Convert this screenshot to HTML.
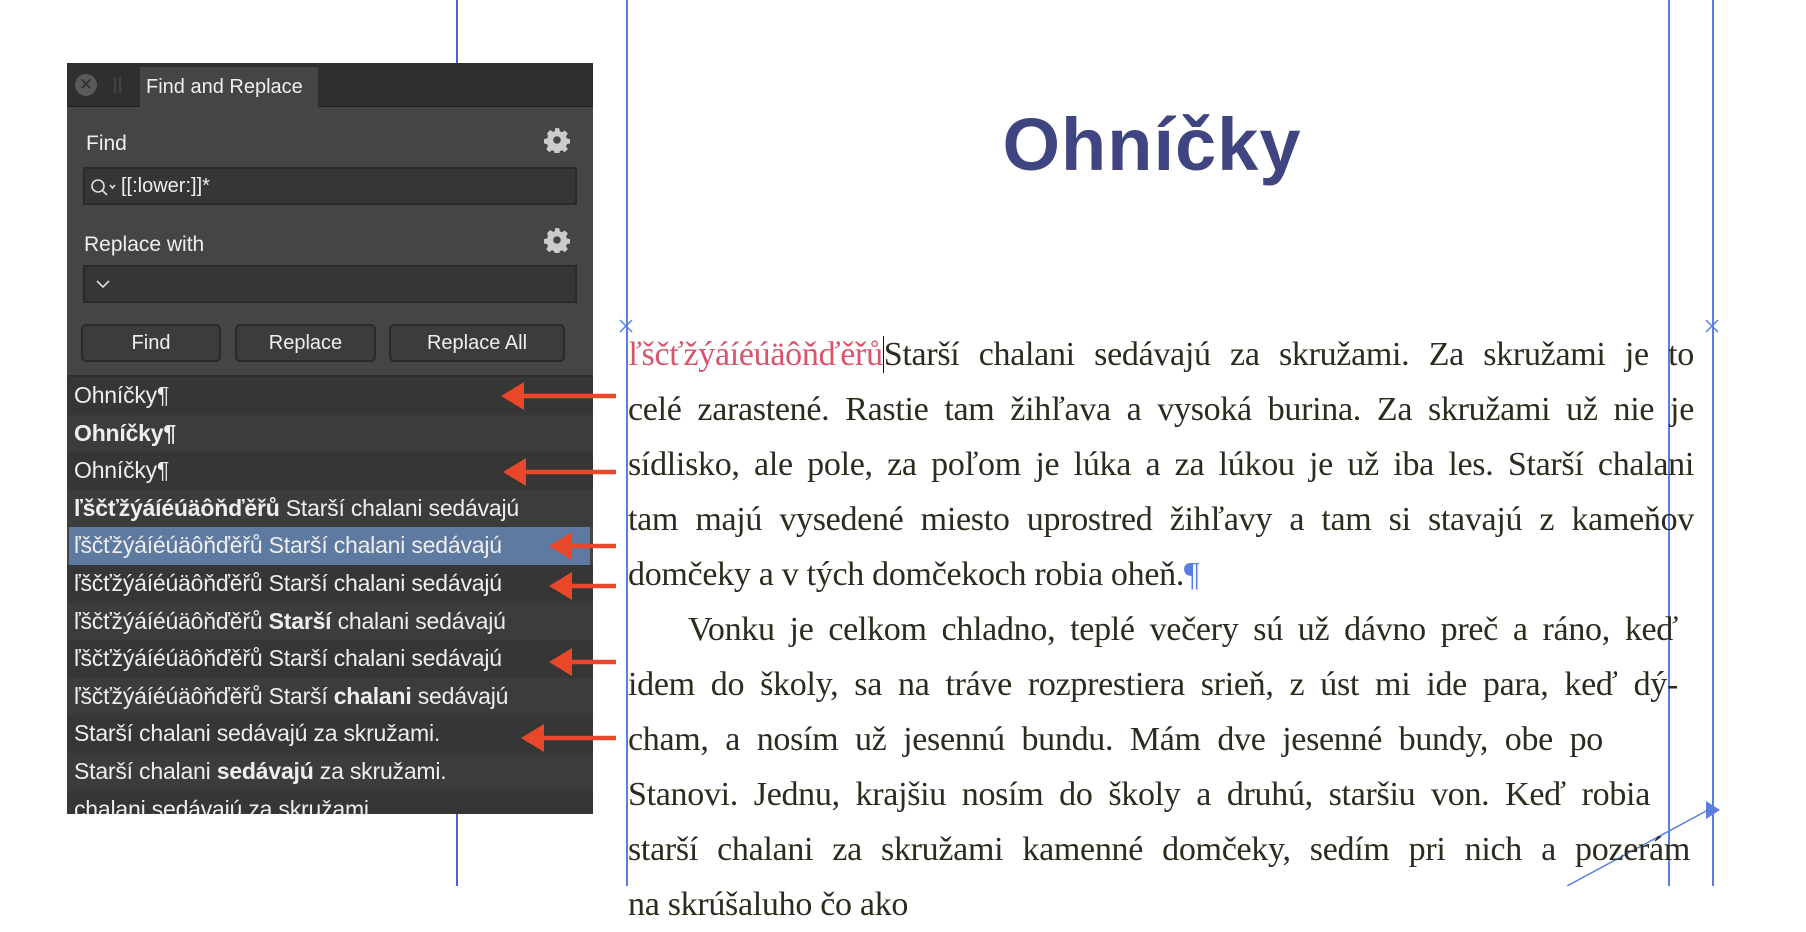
<!DOCTYPE html>
<html><head><meta charset="utf-8"><style>
*{margin:0;padding:0;box-sizing:border-box}
body{width:1806px;height:886px;background:#fff;position:relative;overflow:hidden;font-family:"Liberation Sans",sans-serif}
.abs{position:absolute}
.vl{position:absolute;width:1.5px;background:#4a62d8}
#panel{left:67px;top:63px;width:526px;height:751px;background:#454545;overflow:hidden}
#tabbar{left:0;top:0;width:526px;height:44px;background:#2f2f2f;border-bottom:1px solid #222}
#tab{left:73px;top:4px;width:178px;height:40px;background:#454545;color:#eee;font-size:20px;line-height:40px;padding-left:6px}
.lbl{color:#eee;font-size:21px}
.inp{position:absolute;left:16px;width:494px;height:38px;background:#363636;border:2px solid #2a2a2a;color:#eee;font-size:20px;line-height:34px}
.btn{position:absolute;top:261px;height:38px;background:#3c3c3c;border:2px solid #2a2a2a;border-radius:5px;color:#eee;font-size:20px;text-align:center;line-height:34px}
.row{position:absolute;left:0;width:526px;height:37.6px;color:#eee;font-size:23px;line-height:37px;padding-left:7px;white-space:nowrap;letter-spacing:-0.2px}
.a{background:#363636}.b{background:#3c3c3c}
.txt{position:absolute;left:628px;width:1066px;font-family:"Liberation Serif",serif;font-size:34px;color:#2b2b1e;line-height:55px;text-align:justify;text-align-last:justify;white-space:normal;height:55px;overflow:visible;letter-spacing:-0.3px}
.nj{text-align-last:left;text-align:left}
</style></head><body>
<div class="vl" style="left:456px;top:0;height:63px"></div>
<div class="vl" style="left:456px;top:814px;height:72px"></div>
<div class="vl" style="left:626px;top:0;height:886px;background:#5a7de0"></div>
<div class="vl" style="left:1668px;top:0;height:886px;background:#5a7de0"></div>
<div class="vl" style="left:1712px;top:0;height:886px;background:#5a7de0"></div>

<div id="panel" class="abs">
 <div id="tabbar" class="abs">
  <div class="abs" style="left:8px;top:11px;width:22px;height:22px;border-radius:50%;background:#5a5a5a;color:#2f2f2f;font-size:17px;line-height:22px;text-align:center">✕</div>
  <div class="abs" style="left:47px;top:14px;width:2px;height:16px;background:#444"></div>
  <div class="abs" style="left:52px;top:14px;width:2px;height:16px;background:#444"></div>
  <div id="tab" class="abs">Find and Replace</div>
 </div>
 <div class="abs lbl" style="left:19px;top:69px">Find</div>
 <svg class="abs" style="left:477px;top:64px" width="26" height="26" viewBox="0 0 24 24"><path fill="#ccc" d="M10 1h4l.6 3 2 .9 2.6-1.7 2.8 2.8-1.7 2.6.9 2 3 .6v4l-3 .6-.9 2 1.7 2.6-2.8 2.8-2.6-1.7-2 .9-.6 3h-4l-.6-3-2-.9-2.6 1.7-2.8-2.8 1.7-2.6-.9-2-3-.6v-4l3-.6.9-2L2.9 5.6 5.7 2.8l2.6 1.7 2-.9z"/><circle cx="12" cy="12" r="3.5" fill="#454545"/></svg>
 <div class="inp" style="top:104px;padding-left:4px">
  <svg style="vertical-align:middle" width="32" height="22" viewBox="0 0 32 22"><circle cx="9" cy="10" r="6" stroke="#ddd" stroke-width="1.6" fill="none"/><path d="M13 14l5 5M21 9l2.5 3 2.5-3" stroke="#ddd" stroke-width="1.6" fill="none"/></svg>[[:lower:]]*
 </div>
 <div class="abs lbl" style="left:17px;top:170px">Replace with</div>
 <svg class="abs" style="left:477px;top:164px" width="26" height="26" viewBox="0 0 24 24"><path fill="#ccc" d="M10 1h4l.6 3 2 .9 2.6-1.7 2.8 2.8-1.7 2.6.9 2 3 .6v4l-3 .6-.9 2 1.7 2.6-2.8 2.8-2.6-1.7-2 .9-.6 3h-4l-.6-3-2-.9-2.6 1.7-2.8-2.8 1.7-2.6-.9-2-3-.6v-4l3-.6.9-2L2.9 5.6 5.7 2.8l2.6 1.7 2-.9z"/><circle cx="12" cy="12" r="3.5" fill="#454545"/></svg>
 <div class="inp" style="top:202px"><svg class="abs" style="left:10px;top:10px" width="16" height="14"><path d="M2 4l6 6 6-6" stroke="#ddd" stroke-width="1.6" fill="none"/></svg></div>
 <div class="btn" style="left:14px;width:140px">Find</div>
 <div class="btn" style="left:168px;width:141px">Replace</div>
 <div class="btn" style="left:322px;width:176px">Replace All</div>
 <div class="abs" style="left:0;top:312px;width:526px;height:2px;background:#2e2e2e"></div>
 <div class="row a" style="top:314px">Ohníčky¶</div>
 <div class="row b" style="top:351.6px"><b>Ohníčky¶</b></div>
 <div class="row a" style="top:389.2px">Ohníčky¶</div>
 <div class="row b" style="top:426.8px"><b>ľščťžýáíéúäôňďěřů</b> Starší chalani sedávajú</div>
 <div class="row" style="top:464.4px;background:#5f7aa0;left:2px;width:521px;padding-left:5px">ľščťžýáíéúäôňďěřů Starší chalani sedávajú</div>
 <div class="row a" style="top:502px">ľščťžýáíéúäôňďěřů Starší chalani sedávajú</div>
 <div class="row b" style="top:539.6px">ľščťžýáíéúäôňďěřů <b>Starší</b> chalani sedávajú</div>
 <div class="row a" style="top:577.2px">ľščťžýáíéúäôňďěřů Starší chalani sedávajú</div>
 <div class="row b" style="top:614.8px">ľščťžýáíéúäôňďěřů Starší <b>chalani</b> sedávajú</div>
 <div class="row a" style="top:652.4px">Starší chalani sedávajú za skružami.</div>
 <div class="row b" style="top:690px">Starší chalani <b>sedávajú</b> za skružami.</div>
 <div class="row a" style="top:727.6px">chalani sedávajú za skružami.</div>
</div>

<svg class="abs" style="left:0;top:0" width="1806" height="886">
 <g fill="#e8472a" stroke="#e8472a" stroke-width="4.5">
  <path d="M616 396H520"/><path d="M501 396l23-14v28z" stroke="none"/>
  <path d="M616 472H522"/><path d="M503 472l23-14v28z" stroke="none"/>
  <path d="M616 546H568"/><path d="M549 546l23-14v28z" stroke="none"/>
  <path d="M616 586H568"/><path d="M549 586l23-14v28z" stroke="none"/>
  <path d="M616 662H568"/><path d="M549 662l23-14v28z" stroke="none"/>
  <path d="M616 738H540"/><path d="M521 738l23-14v28z" stroke="none"/>
 </g>
 <g stroke="#5a7de0" stroke-width="1.5" fill="none">
  <path d="M620 320l12 12M632 320l-12 12M1706 320l12 12M1718 320l-12 12"/>
  <path d="M1567 886L1708 810"/>
 </g>
 <path d="M1706 801l14 9-14 9z" fill="#5a7de0"/>
</svg>

<div class="abs" style="left:960px;top:100px;width:384px;text-align:center;font-family:'Liberation Sans',sans-serif;font-weight:bold;font-size:74px;color:#3f4580;letter-spacing:1px;line-height:90px">Ohníčky</div>

<div class="txt" style="top:327px"><span style="color:#d9536b;border-right:1.5px solid #111">ľščťžýáíéúäôňďěřů</span>Starší chalani sedávajú za skružami. Za skružami je to</div>
<div class="txt" style="top:382px">celé zarastené. Rastie tam žihľava a vysoká burina. Za skružami už nie je</div>
<div class="txt" style="top:437px">sídlisko, ale pole, za poľom je lúka a za lúkou je už iba les. Starší chalani</div>
<div class="txt" style="top:492px">tam majú vysedené miesto uprostred žihľavy a tam si stavajú z kameňov</div>
<div class="txt nj" style="top:547px">domčeky a v tých domčekoch robia oheň.<span style="color:#5a7de0">¶</span></div>
<div class="txt" style="top:602px;left:688px;width:990px">Vonku je celkom chladno, teplé večery sú už dávno preč a ráno, keď</div>
<div class="txt" style="top:657px;width:1050px">idem do školy, sa na tráve rozprestiera srieň, z úst mi ide para, keď dý-</div>
<div class="txt" style="top:712px;width:975px">cham, a nosím už jesennú bundu. Mám dve jesenné bundy, obe po</div>
<div class="txt" style="top:767px;width:1022px">Stanovi. Jednu, krajšiu nosím do školy a druhú, staršiu von. Keď robia</div>
<div class="txt" style="top:822px;width:1062px">starší chalani za skružami kamenné domčeky, sedím pri nich a pozerám</div>
<div class="txt nj" style="top:877px">na skrúšaluho čo ako</div>
</body></html>
